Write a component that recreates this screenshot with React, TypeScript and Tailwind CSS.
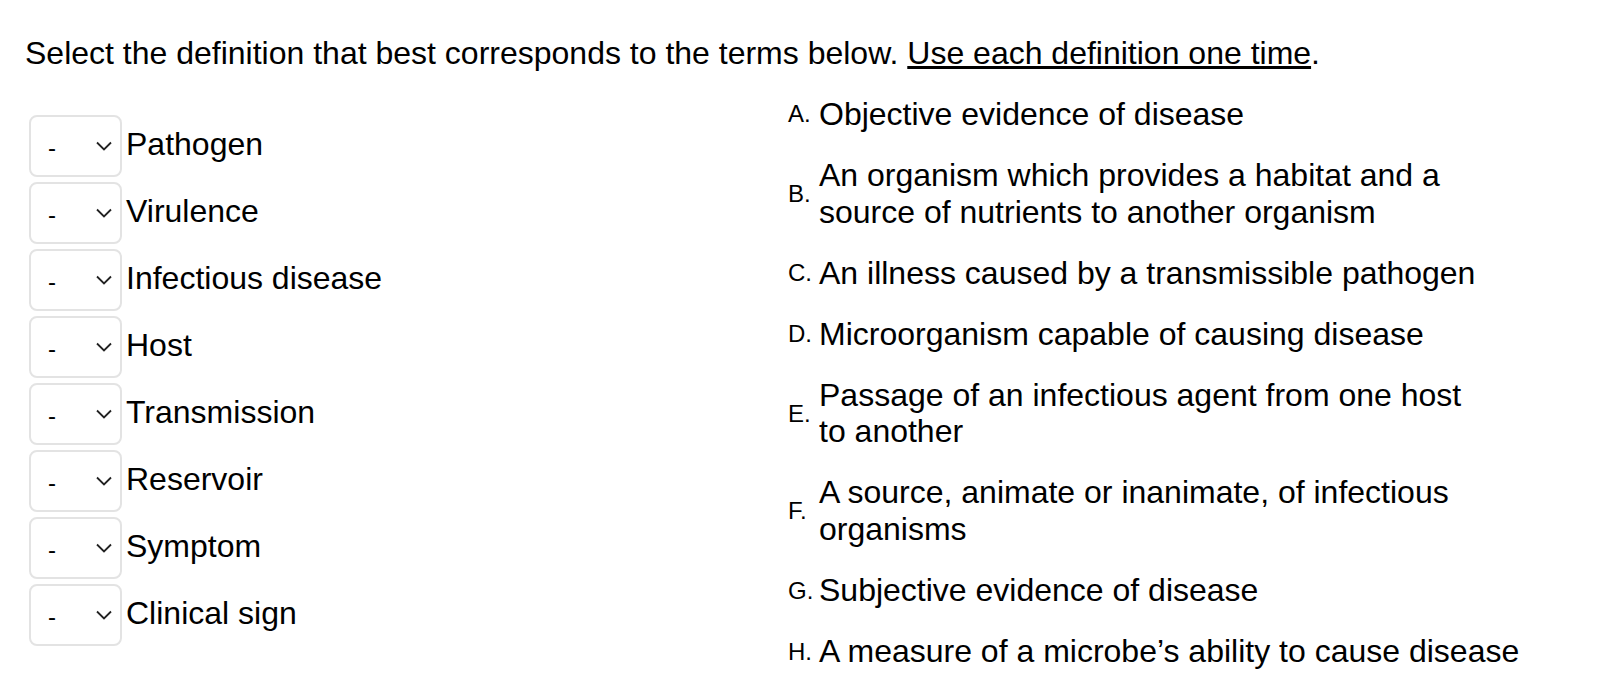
const terms = [
  "Pathogen",
  "Virulence",
  "Infectious disease",
  "Host",
  "Transmission",
  "Reservoir",
  "Symptom",
  "Clinical sign",
];

const definitions = [
  { key: "A", text: "Objective evidence of disease" },
  { key: "B", text: "An organism which provides a habitat and a source of nutrients to another organism" },
  { key: "C", text: "An illness caused by a transmissible pathogen" },
  { key: "D", text: "Microorganism capable of causing disease" },
  { key: "E", text: "Passage of an infectious agent from one host to another" },
  { key: "F", text: "A source, animate or inanimate, of infectious organisms" },
  { key: "G", text: "Subjective evidence of disease" },
  { key: "H", text: "A measure of a microbe\u2019s ability to cause disease", nowrap: true },
];

const Chevron = () => (
  <svg width="16" height="10" viewBox="0 0 16 10" fill="none">
    <polyline points="1,1.5 8,8.5 15,1.5" stroke="#222" strokeWidth="1.8" />
  </svg>
);

const MatchSelect = () => (
  <div className="flex h-[62px] w-[93px] shrink-0 items-center justify-between rounded-lg border-2 border-[#e3e3e3] bg-white pl-[17px] pr-[8px]">
    <span className="translate-y-[2px] text-[24px] leading-none">-</span>
    <Chevron />
  </div>
);

export default function App() {
  return (
    <div className="min-h-screen bg-white pl-[25px] pt-[35px] font-['Liberation_Sans',Arial,sans-serif] text-black">
      <p className="text-[32px] leading-[36.8px]">
        Select the definition that best corresponds to the terms below.{" "}
        <span className="underline">Use each definition one time</span>.
      </p>

      <div className="mt-[12px] flex items-center">
        <div className="mb-[4px] ml-[4px] flex w-[759px] shrink-0 flex-col gap-[5px]">
          {terms.map((term) => (
            <div key={term} className="flex items-center">
              <MatchSelect />
              <span className="ml-[4px] pb-[5px] text-[32px] leading-[36.8px]">{term}</span>
            </div>
          ))}
        </div>

        <div className="flex flex-col">
          {definitions.map((d) => (
            <div key={d.key} className="flex items-center py-[12.1px]">
              <span className="w-[31px] shrink-0 text-[24px] leading-[27.6px]">{d.key}.</span>
              <span
                className={`w-[665px] text-[32px] leading-[36.8px] ${d.nowrap ? "whitespace-nowrap" : ""}`}
              >
                {d.text}
              </span>
            </div>
          ))}
        </div>
      </div>
    </div>
  );
}
